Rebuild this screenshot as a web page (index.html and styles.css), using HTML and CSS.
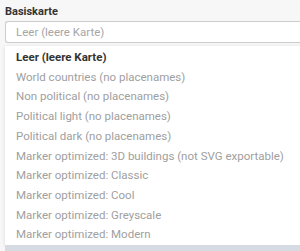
FILE: index.html
```html
<!DOCTYPE html>
<html lang="de">
<head>
    <meta charset="UTF-8">
    <title>Basiskarte</title>
    <link rel="stylesheet" href="styles.css">
</head>
<body>
    <div class="field">
        <label class="field-label">Basiskarte</label>
        <div class="select-box">Leer (leere Karte)</div>
        <ul class="options">
            <li class="active">Leer (leere Karte)</li>
            <li>World countries (no placenames)</li>
            <li>Non political (no placenames)</li>
            <li>Political light (no placenames)</li>
            <li>Political dark (no placenames)</li>
            <li>Marker optimized: 3D buildings (not SVG exportable)</li>
            <li>Marker optimized: Classic</li>
            <li>Marker optimized: Cool</li>
            <li>Marker optimized: Greyscale</li>
            <li>Marker optimized: Modern</li>
        </ul>
        <div class="footer-bar"></div>
    </div>
</body>
</html>
```
FILE: styles.css
```css
body {
    margin: 0;
    background-color: #f7f7f7;
    font-family: Roboto, "Liberation Sans", sans-serif;
    overflow: hidden;
}

.field {
    padding: 5px 0 0 5px;
}

.field-label {
    display: block;
    font-size: 11px;
    font-weight: bold;
    color: #333;
    line-height: 14px;
    margin-bottom: 2px;
}

.select-box {
    height: 20px;
    line-height: 20px;
    border: 1px solid #ccc;
    border-right: none;
    border-radius: 3px 0 0 3px;
    background-color: #fff;
    padding-left: 10px;
    font-size: 11.5px;
    color: #a6a6a6;
}

.options {
    list-style: none;
    margin: 3px 0 0;
    padding: 2px 0 0;
    background-color: #fff;
    box-shadow: 0 1px 4px rgba(0, 0, 0, 0.12);
}

.options li {
    padding-left: 11px;
    font-size: 11.5px;
    line-height: 19.7px;
    color: #a0a0a0;
}

.options li.active {
    font-weight: bold;
    color: #333;
}

.footer-bar {
    height: 8px;
    background-color: #d6dae2;
}
```
